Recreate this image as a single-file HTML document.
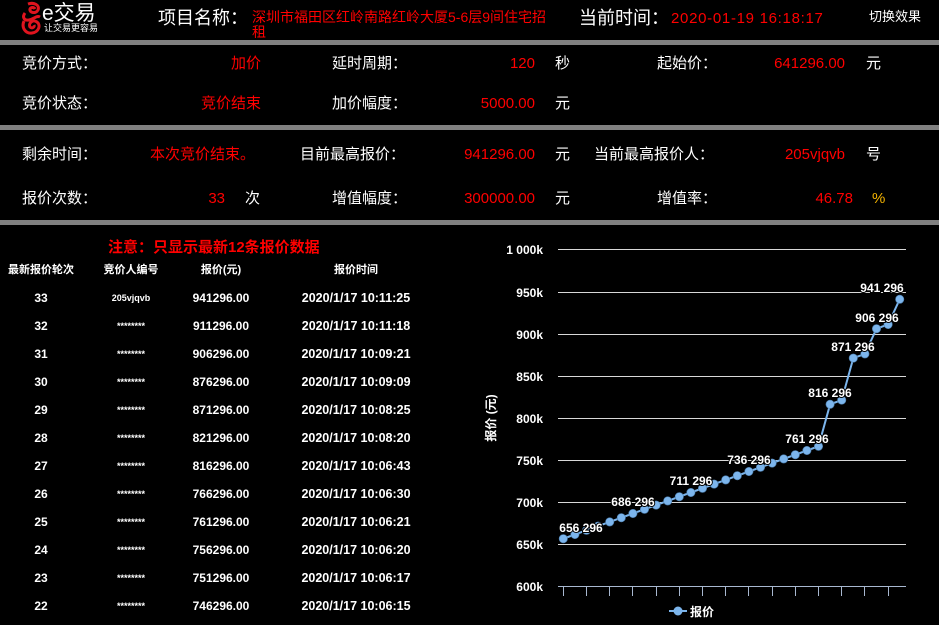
<!DOCTYPE html>
<html><head><meta charset="utf-8">
<style>
*{margin:0;padding:0;box-sizing:border-box}
body{width:939px;height:625px;background:#000;overflow:hidden;position:relative;font-family:"Liberation Sans","Noto Sans CJK SC","WenQuanYi Zen Hei",sans-serif;color:#fff}
.a{position:absolute;white-space:nowrap;line-height:1}
.bar{position:absolute;left:0;width:939px;background:#808080}
.r{color:#f00}
.l{font-size:15px}
.rt{text-align:right}
.tb{font-size:11px;font-weight:bold;text-align:center;width:160px;margin-left:-80px}
.v{font-size:12px}
.t{font-size:12.5px}
</style></head><body>
<svg class="a" style="left:20px;top:1px" width="22" height="34" viewBox="0 0 22 34">
<path d="M8 3 C14 1 20 4 18 9 C16 13 9 12 10 8 C11 6 14 6 15 8" fill="none" stroke="#e0141e" stroke-width="3"/>
<path d="M5 12 C2 16 4 20 9 19 C14 18 17 14 20 16" fill="none" stroke="#e0141e" stroke-width="3"/>
<path d="M4 20 C1 27 6 33 12 32 C19 31 21 24 17 21 C13 18 8 22 10 26 C12 28 15 26 14 24" fill="none" stroke="#e0141e" stroke-width="3"/>
</svg>
<div class="a" style="left:42px;top:3px;font-size:21px">e交易</div>
<div class="a" style="left:44px;top:24px;font-size:9px">让交易更容易</div>
<div class="a" style="left:158px;top:9px;font-size:18px">项目名称：</div>
<div class="a r" style="left:252px;top:10px;font-size:14px;line-height:15px;white-space:normal;width:298px">深圳市福田区红岭南路红岭大厦5-6层9间住宅招租</div>
<div class="a" style="left:579px;top:9px;font-size:18px">当前时间：</div>
<div class="a r" style="left:671px;top:11px;font-size:15px;letter-spacing:0.7px">2020-01-19 16:18:17</div>
<div class="a" style="left:869px;top:10px;font-size:13px">切换效果</div>
<div class="bar" style="top:40px;height:5px"></div>
<div class="bar" style="top:125px;height:5px"></div>
<div class="bar" style="top:220px;height:5px"></div>

<div class="a l" style="left:22px;top:56px">竞价方式：</div>
<div class="a l r rt" style="right:678px;top:56px">加价</div>
<div class="a l" style="left:332px;top:56px">延时周期：</div>
<div class="a l r rt" style="right:404px;top:56px">120</div>
<div class="a l" style="left:555px;top:56px">秒</div>
<div class="a l" style="left:657px;top:56px">起始价：</div>
<div class="a l r rt" style="right:94px;top:56px">641296.00</div>
<div class="a l" style="left:866px;top:56px">元</div>

<div class="a l" style="left:22px;top:96px">竞价状态：</div>
<div class="a l r rt" style="right:678px;top:96px">竞价结束</div>
<div class="a l" style="left:332px;top:96px">加价幅度：</div>
<div class="a l r rt" style="right:404px;top:96px">5000.00</div>
<div class="a l" style="left:555px;top:96px">元</div>

<div class="a l" style="left:22px;top:147px">剩余时间：</div>
<div class="a l r" style="left:150px;top:147px">本次竞价结束。</div>
<div class="a l" style="left:300px;top:147px">目前最高报价：</div>
<div class="a l r rt" style="right:404px;top:147px">941296.00</div>
<div class="a l" style="left:555px;top:147px">元</div>
<div class="a l" style="left:594px;top:147px">当前最高报价人：</div>
<div class="a l r rt" style="right:94px;top:147px">205vjqvb</div>
<div class="a l" style="left:866px;top:147px">号</div>

<div class="a l" style="left:22px;top:191px">报价次数：</div>
<div class="a l r rt" style="right:714px;top:191px">33</div>
<div class="a l" style="left:245px;top:191px">次</div>
<div class="a l" style="left:332px;top:191px">增值幅度：</div>
<div class="a l r rt" style="right:404px;top:191px">300000.00</div>
<div class="a l" style="left:555px;top:191px">元</div>
<div class="a l" style="left:657px;top:191px">增值率：</div>
<div class="a l r rt" style="right:86px;top:191px">46.78</div>
<div class="a l" style="left:872px;top:191px;color:#f5b400">%</div>

<div class="a r" style="left:108px;top:240px;font-size:15px;font-weight:bold">注意：只显示最新12条报价数据</div>
<div class="a tb" style="left:41px;top:265px">最新报价轮次</div>
<div class="a tb" style="left:131px;top:265px">竞价人编号</div>
<div class="a tb" style="left:221px;top:265px">报价(元)</div>
<div class="a tb" style="left:356px;top:265px">报价时间</div>

<div class="a tb v" style="left:41px;top:292px">33</div><div class="a tb" style="left:131px;top:294px;font-size:9px">205vjqvb</div><div class="a tb v" style="left:221px;top:292px">941296.00</div><div class="a tb t" style="left:356px;top:292px">2020/1/17 10:11:25</div>
<div class="a tb v" style="left:41px;top:320px">32</div><div class="a tb" style="left:131px;top:322px;font-size:9px">********</div><div class="a tb v" style="left:221px;top:320px">911296.00</div><div class="a tb t" style="left:356px;top:320px">2020/1/17 10:11:18</div>
<div class="a tb v" style="left:41px;top:348px">31</div><div class="a tb" style="left:131px;top:350px;font-size:9px">********</div><div class="a tb v" style="left:221px;top:348px">906296.00</div><div class="a tb t" style="left:356px;top:348px">2020/1/17 10:09:21</div>
<div class="a tb v" style="left:41px;top:376px">30</div><div class="a tb" style="left:131px;top:378px;font-size:9px">********</div><div class="a tb v" style="left:221px;top:376px">876296.00</div><div class="a tb t" style="left:356px;top:376px">2020/1/17 10:09:09</div>
<div class="a tb v" style="left:41px;top:404px">29</div><div class="a tb" style="left:131px;top:406px;font-size:9px">********</div><div class="a tb v" style="left:221px;top:404px">871296.00</div><div class="a tb t" style="left:356px;top:404px">2020/1/17 10:08:25</div>
<div class="a tb v" style="left:41px;top:432px">28</div><div class="a tb" style="left:131px;top:434px;font-size:9px">********</div><div class="a tb v" style="left:221px;top:432px">821296.00</div><div class="a tb t" style="left:356px;top:432px">2020/1/17 10:08:20</div>
<div class="a tb v" style="left:41px;top:460px">27</div><div class="a tb" style="left:131px;top:462px;font-size:9px">********</div><div class="a tb v" style="left:221px;top:460px">816296.00</div><div class="a tb t" style="left:356px;top:460px">2020/1/17 10:06:43</div>
<div class="a tb v" style="left:41px;top:488px">26</div><div class="a tb" style="left:131px;top:490px;font-size:9px">********</div><div class="a tb v" style="left:221px;top:488px">766296.00</div><div class="a tb t" style="left:356px;top:488px">2020/1/17 10:06:30</div>
<div class="a tb v" style="left:41px;top:516px">25</div><div class="a tb" style="left:131px;top:518px;font-size:9px">********</div><div class="a tb v" style="left:221px;top:516px">761296.00</div><div class="a tb t" style="left:356px;top:516px">2020/1/17 10:06:21</div>
<div class="a tb v" style="left:41px;top:544px">24</div><div class="a tb" style="left:131px;top:546px;font-size:9px">********</div><div class="a tb v" style="left:221px;top:544px">756296.00</div><div class="a tb t" style="left:356px;top:544px">2020/1/17 10:06:20</div>
<div class="a tb v" style="left:41px;top:572px">23</div><div class="a tb" style="left:131px;top:574px;font-size:9px">********</div><div class="a tb v" style="left:221px;top:572px">751296.00</div><div class="a tb t" style="left:356px;top:572px">2020/1/17 10:06:17</div>
<div class="a tb v" style="left:41px;top:600px">22</div><div class="a tb" style="left:131px;top:602px;font-size:9px">********</div><div class="a tb v" style="left:221px;top:600px">746296.00</div><div class="a tb t" style="left:356px;top:600px">2020/1/17 10:06:15</div>

<svg class="a" style="left:0;top:0" width="939" height="625" viewBox="0 0 939 625">
<g stroke="#d8d8d8" stroke-width="1">
<line x1="558" x2="906" y1="249.5" y2="249.5"/><line x1="558" x2="906" y1="292.5" y2="292.5"/><line x1="558" x2="906" y1="334.5" y2="334.5"/><line x1="558" x2="906" y1="376.5" y2="376.5"/><line x1="558" x2="906" y1="418.5" y2="418.5"/><line x1="558" x2="906" y1="460.5" y2="460.5"/><line x1="558" x2="906" y1="502.5" y2="502.5"/><line x1="558" x2="906" y1="544.5" y2="544.5"/>
</g>
<line x1="558" x2="906" y1="586.5" y2="586.5" stroke="#a8b8d0"/>
<g stroke="#a8b8d0"><line x1="563.5" x2="563.5" y1="587" y2="596"/><line x1="586.5" x2="586.5" y1="587" y2="596"/><line x1="609.5" x2="609.5" y1="587" y2="596"/><line x1="632.5" x2="632.5" y1="587" y2="596"/><line x1="656.5" x2="656.5" y1="587" y2="596"/><line x1="679.5" x2="679.5" y1="587" y2="596"/><line x1="702.5" x2="702.5" y1="587" y2="596"/><line x1="725.5" x2="725.5" y1="587" y2="596"/><line x1="748.5" x2="748.5" y1="587" y2="596"/><line x1="772.5" x2="772.5" y1="587" y2="596"/><line x1="795.5" x2="795.5" y1="587" y2="596"/><line x1="818.5" x2="818.5" y1="587" y2="596"/><line x1="841.5" x2="841.5" y1="587" y2="596"/><line x1="864.5" x2="864.5" y1="587" y2="596"/><line x1="888.5" x2="888.5" y1="587" y2="596"/></g>
<g font-family="Liberation Sans, sans-serif" font-size="12" font-weight="bold" fill="#fff" text-anchor="end">
<text x="543" y="254">1 000k</text><text x="543" y="297">950k</text><text x="543" y="339">900k</text><text x="543" y="381">850k</text><text x="543" y="423">800k</text><text x="543" y="465">750k</text><text x="543" y="507">700k</text><text x="543" y="549">650k</text><text x="543" y="591">600k</text>
</g>
<text transform="translate(495,418) rotate(-90)" text-anchor="middle" font-family="Liberation Sans, Noto Sans CJK SC, sans-serif" font-size="12" font-weight="bold" fill="#fff">报价 (元)</text>
<polyline fill="none" stroke="#7cb5ec" stroke-width="2" points="563.3,538.7 574.9,534.5 586.5,530.3 598.1,526.1 609.7,521.9 621.3,517.7 632.9,513.5 644.5,509.3 656.1,505.1 667.7,500.9 679.3,496.7 690.9,492.5 702.5,488.3 714.1,484.1 725.7,479.9 737.3,475.7 748.9,471.5 760.5,467.3 772.1,463.1 783.7,458.9 795.3,454.7 806.9,450.5 818.5,446.3 830.1,404.3 841.7,400.1 853.3,358.1 864.9,353.9 876.5,328.7 888.1,324.5 899.7,299.3"/>
<g fill="#7cb5ec" stroke="#4a7aa8" stroke-width="0.6">
<circle cx="563.3" cy="538.7" r="4.2"/><circle cx="574.9" cy="534.5" r="4.2"/><circle cx="586.5" cy="530.3" r="4.2"/><circle cx="598.1" cy="526.1" r="4.2"/><circle cx="609.7" cy="521.9" r="4.2"/><circle cx="621.3" cy="517.7" r="4.2"/><circle cx="632.9" cy="513.5" r="4.2"/><circle cx="644.5" cy="509.3" r="4.2"/><circle cx="656.1" cy="505.1" r="4.2"/><circle cx="667.7" cy="500.9" r="4.2"/><circle cx="679.3" cy="496.7" r="4.2"/><circle cx="690.9" cy="492.5" r="4.2"/><circle cx="702.5" cy="488.3" r="4.2"/><circle cx="714.1" cy="484.1" r="4.2"/><circle cx="725.7" cy="479.9" r="4.2"/><circle cx="737.3" cy="475.7" r="4.2"/><circle cx="748.9" cy="471.5" r="4.2"/><circle cx="760.5" cy="467.3" r="4.2"/><circle cx="772.1" cy="463.1" r="4.2"/><circle cx="783.7" cy="458.9" r="4.2"/><circle cx="795.3" cy="454.7" r="4.2"/><circle cx="806.9" cy="450.5" r="4.2"/><circle cx="818.5" cy="446.3" r="4.2"/><circle cx="830.1" cy="404.3" r="4.2"/><circle cx="841.7" cy="400.1" r="4.2"/><circle cx="853.3" cy="358.1" r="4.2"/><circle cx="864.9" cy="353.9" r="4.2"/><circle cx="876.5" cy="328.7" r="4.2"/><circle cx="888.1" cy="324.5" r="4.2"/><circle cx="899.7" cy="299.3" r="4.2"/>
</g>
<g font-family="Liberation Sans, sans-serif" font-size="12" font-weight="bold" fill="#fff" text-anchor="middle" stroke="#000" stroke-width="2" paint-order="stroke">
<text x="581" y="532">656 296</text><text x="633" y="506">686 296</text><text x="691" y="485">711 296</text><text x="749" y="464">736 296</text><text x="807" y="443">761 296</text><text x="830" y="397">816 296</text><text x="853" y="351">871 296</text><text x="877" y="322">906 296</text><text x="882" y="292">941 296</text>
</g>
<line x1="669" x2="687" y1="611" y2="611" stroke="#7cb5ec" stroke-width="2"/>
<circle cx="678" cy="611" r="4.5" fill="#7cb5ec"/>
<text x="690" y="616" font-family="Liberation Sans, Noto Sans CJK SC, sans-serif" font-size="12" font-weight="bold" fill="#fff">报价</text>
</svg>
</body></html>
